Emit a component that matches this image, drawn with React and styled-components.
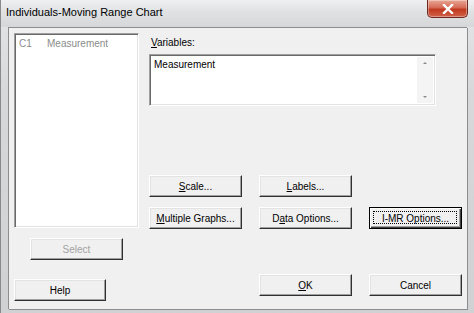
import React from "react";
import styled, { createGlobalStyle } from "styled-components";

const GlobalStyle = createGlobalStyle`
	html, body {
		margin: 0;
		padding: 0;
		background: #fff;
	}
	body {
		font-family: "Liberation Sans", Arial, sans-serif;
	}
`;

const Window = styled.div`
	width: 474px;
	height: 313px;
	display: flex;
	flex-direction: column;
	background: linear-gradient(180deg, #e4e6e8 0%, #d6d8da 30%, #cfd1d3 100%);
	box-sizing: border-box;
	border-left: 1px solid #8a8a8a;
	overflow: hidden;
`;

const TitleBar = styled.div`
	height: 27px;
	flex: none;
	display: flex;
	align-items: flex-start;
	background: linear-gradient(180deg, #eef0f2 0%, #dfe1e3 45%, #d5d7d9 100%);
`;

const Title = styled.div`
	margin: 5px 0 0 5px;
	font-size: 11px;
	line-height: 14px;
	color: #000;
	white-space: nowrap;
`;

const CloseButton = styled.div`
	margin-left: auto;
	margin-right: 6px;
	width: 41px;
	height: 18px;
	border: 1px solid #6e2a22;
	border-top: none;
	border-radius: 0 0 5px 5px;
	box-sizing: border-box;
	display: flex;
	align-items: center;
	justify-content: center;
	background: linear-gradient(180deg, #e8a896 0%, #d56a55 45%, #c0391f 55%, #d0624a 100%);
	box-shadow: inset 0 0 0 1px rgba(255, 255, 255, 0.35);
`;

const Body = styled.div`
	flex: 1;
	display: flex;
	padding: 0 7px 4px 7px;
`;

const Client = styled.div`
	flex: 1;
	display: flex;
	background: #f0f0f0;
	border-left: 1px solid #8d8d8d;
	border-top: 1px solid #8d8d8d;
	box-shadow: 1px 1px 0 #8d8d8d;
`;

const LeftCol = styled.div`
	width: 135px;
	padding: 5px 0 0 5px;
	box-sizing: border-box;
	display: flex;
	flex-direction: column;
`;

const RightCol = styled.div`
	flex: 1;
	padding-left: 5px;
	display: flex;
	flex-direction: column;
`;

const Sunken = styled.div`
	background: #fff;
	box-sizing: border-box;
	border: 1px solid;
	border-color: #a0a0a0 #ffffff #ffffff #a0a0a0;
	box-shadow: inset 1px 1px 0 #696969, inset -1px -1px 0 #e3e3e3;
`;

const ListBox = styled(Sunken)`
	width: 125px;
	height: 195px;
	padding: 3px 4px;
`;

const ListItem = styled.div`
	display: flex;
	font-size: 10px;
	line-height: 13px;
	color: #8c8c8c;
`;

const ColName = styled.span`
	width: 28px;
`;

const Label = styled.div`
	margin-top: 8px;
	margin-left: 2px;
	height: 13px;
	font-size: 10px;
	line-height: 13px;
	color: #000;
`;

const VarBox = styled(Sunken)`
	margin-top: 5px;
	width: 287px;
	height: 52px;
	display: flex;
`;

const VarText = styled.div`
	flex: 1;
	padding: 3px 4px;
	font-size: 10px;
	line-height: 13px;
	color: #000;
`;

const ScrollBar = styled.div`
	width: 16px;
	margin: 2px 2px 2px 0;
	background: #f4f4f4;
	display: flex;
	flex-direction: column;
	justify-content: space-between;
	align-items: center;
	padding: 5px 0;
	box-sizing: border-box;
`;

const Arrow = styled.div`
	width: 0;
	height: 0;
	border-left: 2px solid transparent;
	border-right: 2px solid transparent;
	${(p) =>
		p.$down
			? "border-top: 2px solid #8a8a8a;"
			: "border-bottom: 2px solid #8a8a8a;"}
`;

const ButtonRow = styled.div`
	display: flex;
	gap: 17px;
	margin-top: ${(p) => p.$top}px;
`;

const Button = styled.div`
	position: relative;
	width: ${(p) => p.$w || 93}px;
	height: ${(p) => p.$h || 22}px;
	margin-left: ${(p) => p.$left || 0}px;
	margin-top: ${(p) => p.$top || 0}px;
	box-sizing: border-box;
	display: flex;
	align-items: center;
	justify-content: center;
	background: #f0f0f0;
	font-size: 10px;
	color: ${(p) => (p.$disabled ? "#a3a3a3" : "#000")};
	border: 1px solid;
	border-color: ${(p) =>
		p.$default ? "#000" : "#ffffff #303030 #303030 #ffffff"};
	box-shadow: ${(p) =>
		p.$default
			? "inset 1px 1px 0 #fff, inset -1px -1px 0 #404040, inset -2px -2px 0 #a0a0a0"
			: "inset -1px -1px 0 #a0a0a0, inset 1px 1px 0 #e3e3e3"};
	${(p) =>
		p.$default &&
		`&::after {
			content: "";
			position: absolute;
			inset: 3px 4px 4px 3px;
			border: 1px dotted #000;
		}`}
`;

const Spacer = styled.div`
	flex: 1;
`;

const XIcon = () => (
	<svg width="12" height="10" viewBox="0 0 12 10">
		<path
			d="M2 1 L10 9 M10 1 L2 9"
			stroke="#fff"
			strokeWidth="2.4"
			strokeLinecap="square"
		/>
	</svg>
);

const App = () => {
	return (
		<>
			<GlobalStyle />
			<Window>
				<TitleBar>
					<Title>Individuals-Moving Range Chart</Title>
					<CloseButton>
						<XIcon />
					</CloseButton>
				</TitleBar>
				<Body>
					<Client>
						<LeftCol>
							<ListBox>
								<ListItem>
									<ColName>C1</ColName>
									<span>Measurement</span>
								</ListItem>
							</ListBox>
							<Button $disabled $left={16} $top={10}>
								Select
							</Button>
							<Spacer />
							<Button $w={92} $top={0} style={{ marginBottom: 8 }}>
								Help
							</Button>
						</LeftCol>
						<RightCol>
							<Label>
								<u>V</u>ariables:
							</Label>
							<VarBox>
								<VarText>Measurement</VarText>
								<ScrollBar>
									<Arrow />
									<Arrow $down />
								</ScrollBar>
							</VarBox>
							<ButtonRow $top={69}>
								<Button>
									<span>
										<u>S</u>cale...
									</span>
								</Button>
								<Button>
									<span>
										<u>L</u>abels...
									</span>
								</Button>
							</ButtonRow>
							<ButtonRow $top={10}>
								<Button>
									<span>
										<u>M</u>ultiple Graphs...
									</span>
								</Button>
								<Button>
									<span>
										D<u>a</u>ta Options...
									</span>
								</Button>
								<Button $default>I-MR Options...</Button>
							</ButtonRow>
							<ButtonRow $top={45}>
								<Button style={{ marginLeft: 110 }}>
									<span>
										<u>O</u>K
									</span>
								</Button>
								<Button>Cancel</Button>
							</ButtonRow>
						</RightCol>
					</Client>
				</Body>
			</Window>
		</>
	);
};

export default App;
